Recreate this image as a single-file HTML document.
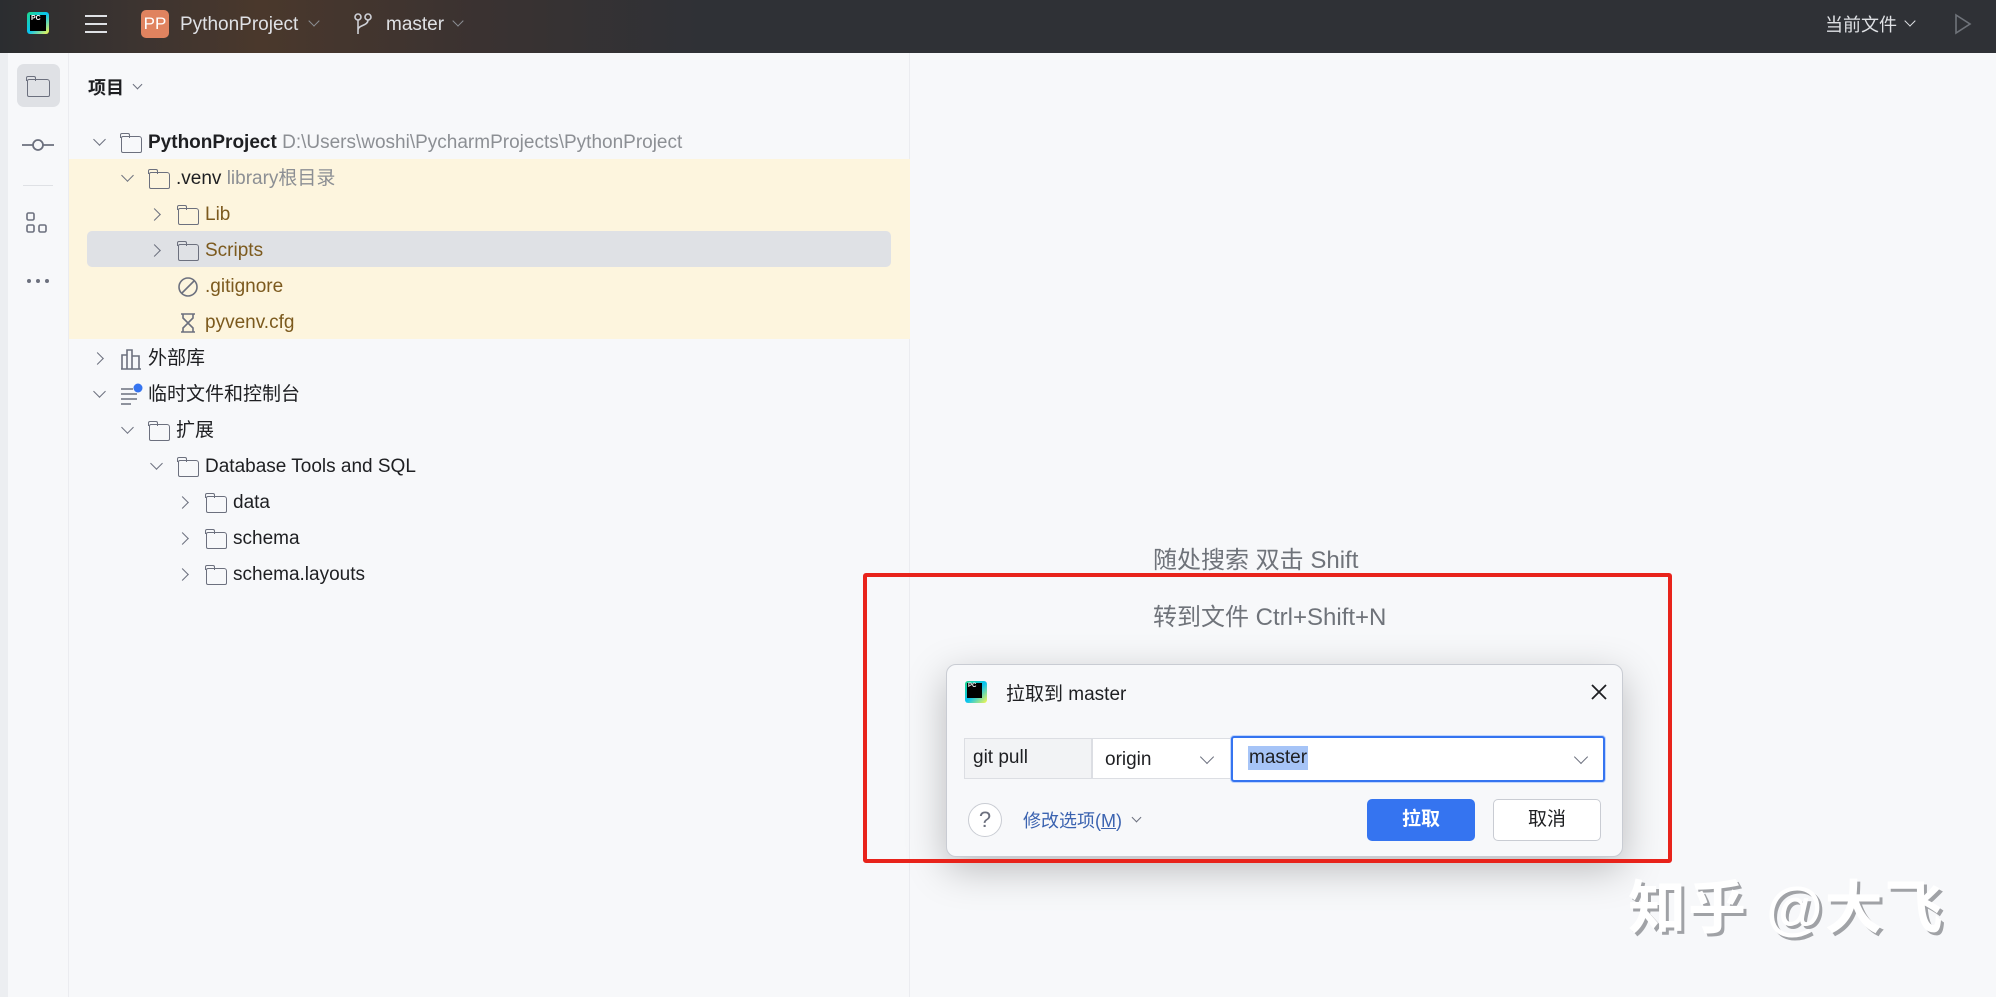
<!DOCTYPE html>
<html><head><meta charset="utf-8"><style>
*{margin:0;padding:0;box-sizing:border-box}
body{width:1996px;height:997px;overflow:hidden;background:#f7f8fa;font-family:"Liberation Sans","Noto Sans CJK SC",sans-serif;position:relative;color:#1e1f22}
.a{position:absolute}
.top{left:0;top:0;width:1996px;height:53px;background:linear-gradient(90deg,#2b2d30 0px,#3d3430 140px,#4a382c 260px,#3a3231 480px,#2f3136 700px,#2f3136 100%)}
.t{white-space:nowrap;font-size:19px;line-height:24px}
.row{position:absolute;left:0;height:36px;white-space:nowrap;font-size:19px;line-height:40px}
.chev{position:absolute;width:9px;height:9px;border-right:1.6px solid #6c707e;border-bottom:1.6px solid #6c707e}
.down{transform:rotate(45deg)}
.right{transform:rotate(-45deg)}
.fold{position:absolute;width:21px;height:17px;border:1.6px solid #6c707e;border-radius:2px 3px 2px 2px}
.fold:before{content:"";position:absolute;left:-1.6px;top:-4px;width:8px;height:4px;border:1.6px solid #6c707e;border-bottom:none;border-radius:2px 2px 0 0}
</style></head><body>
<div class="a" style="left:0;top:0;width:8px;height:997px;background:#eceef1"></div>
<div class="a top"></div>
<div class="a" style="left:27px;top:12px;width:22px;height:22px;background:linear-gradient(135deg,#21d789,#07c3f2 50%,#fcf84a);border-radius:3px"></div>
<div class="a" style="left:30px;top:15px;width:16px;height:16px;background:#000;color:#fff;font-size:7px;line-height:8px;padding-left:1px;font-weight:bold">PC</div>
<div class="a" style="left:85px;top:15px;width:22px;height:2px;background:#dfe1e5;box-shadow:0 8px 0 #dfe1e5,0 16px 0 #dfe1e5"></div>
<div class="a" style="left:141px;top:10px;width:28px;height:28px;background:#e0835f;border-radius:5px;color:#fff;font-size:17px;line-height:28px;text-align:center">PP</div>
<div class="a t" style="left:180px;top:13px;color:#dfe1e5">PythonProject</div>
<div class="a chev down" style="left:310px;top:17px;border-color:#8c8f94;width:8px;height:8px"></div>
<svg class="a" style="left:353px;top:12px" width="20" height="24" viewBox="0 0 20 24" fill="none" stroke="#ced0d6" stroke-width="1.6"><circle cx="5" cy="5" r="3"/><circle cx="15" cy="5" r="3"/><path d="M5 8v14M15 8c0 6-10 5-10 10"/></svg>
<div class="a t" style="left:386px;top:13px;color:#dfe1e5">master</div>
<div class="a chev down" style="left:454px;top:17px;border-color:#8c8f94;width:8px;height:8px"></div>
<div class="a t" style="left:1825px;top:13px;color:#dfe1e5;font-size:18px">当前文件</div>
<div class="a chev down" style="left:1906px;top:17px;border-color:#dfe1e5;width:8px;height:8px"></div>
<svg class="a" style="left:1953px;top:12px" width="20" height="24"><path d="M3 3L17 12L3 21Z" fill="none" stroke="#6f737a" stroke-width="1.6"/></svg>

<div class="a" style="left:8px;top:53px;width:61px;height:944px;background:#f7f8fa;border-right:1px solid #ebecf0"></div>
<div class="a" style="left:17px;top:64px;width:43px;height:43px;background:#dfe1e5;border-radius:7px"></div>
<div class="a fold" style="left:27px;top:79px;width:23px;height:18px"></div>
<svg class="a" style="left:22px;top:135px" width="32" height="20" stroke="#6c707e" stroke-width="1.8" fill="none"><circle cx="16" cy="10" r="5"/><path d="M0 10h11M21 10h11"/></svg>
<div class="a" style="left:23px;top:185px;width:30px;height:1px;background:#dfe1e5"></div>
<svg class="a" style="left:26px;top:212px" width="22" height="22" stroke="#6c707e" stroke-width="1.6" fill="none"><rect x="1" y="1" width="7" height="7" rx="1.5"/><rect x="1" y="13" width="7" height="7" rx="1.5"/><rect x="13" y="13" width="7" height="7" rx="1.5"/></svg>
<div class="a" style="left:27px;top:279px;width:4px;height:4px;border-radius:2px;background:#6c707e;box-shadow:9px 0 0 #6c707e,18px 0 0 #6c707e"></div>

<div class="a" style="left:69px;top:53px;width:841px;height:944px;background:#f7f8fa;border-right:1px solid #ebecf0"></div>
<div class="a t" style="left:88px;top:76px;font-weight:bold;font-size:18px">项目</div>
<div class="a chev down" style="left:134px;top:81px;width:7px;height:7px"></div>
<div class="a" style="left:69px;top:159px;width:841px;height:180px;background:#fdf5de"></div>
<div class="a" style="left:87px;top:231px;width:804px;height:36px;background:#dfe1e5;border-radius:5px"></div>

<div class="row" style="top:123px;width:910px">
 <div class="chev down" style="left:95px;top:12px"></div><div class="fold" style="left:121px;top:13px"></div>
 <span class="a" style="left:148px"><b>PythonProject</b> <span style="color:#8c8f94">D:\Users\woshi\PycharmProjects\PythonProject</span></span></div>
<div class="row" style="top:159px;width:910px">
 <div class="chev down" style="left:123px;top:12px"></div><div class="fold" style="left:149px;top:13px"></div>
 <span class="a" style="left:176px">.venv <span style="color:#8c8f94">library根目录</span></span></div>
<div class="row" style="top:195px;width:910px;color:#7c5a1e">
 <div class="chev right" style="left:150px;top:15px"></div><div class="fold" style="left:178px;top:13px"></div>
 <span class="a" style="left:205px">Lib</span></div>
<div class="row" style="top:231px;width:910px;color:#7c5a1e">
 <div class="chev right" style="left:150px;top:15px"></div><div class="fold" style="left:178px;top:13px"></div>
 <span class="a" style="left:205px">Scripts</span></div>
<div class="row" style="top:267px;width:910px;color:#7c5a1e">
 <svg class="a" style="left:177px;top:9px" width="22" height="22" fill="none" stroke="#6c707e" stroke-width="1.6"><circle cx="11" cy="11" r="9"/><path d="M5 17L17 5"/></svg>
 <span class="a" style="left:205px">.gitignore</span></div>
<div class="row" style="top:303px;width:910px;color:#7c5a1e">
 <svg class="a" style="left:179px;top:9px" width="18" height="22" fill="none" stroke="#6c707e" stroke-width="1.6"><path d="M2 2h14M2 20h14M4 2v4l5 5 5-5V2M4 20v-4l5-5 5 5v4"/></svg>
 <span class="a" style="left:205px">pyvenv.cfg</span></div>
<div class="row" style="top:339px;width:910px">
 <div class="chev right" style="left:93px;top:15px"></div>
 <svg class="a" style="left:120px;top:9px" width="22" height="22" fill="none" stroke="#6c707e" stroke-width="1.6"><path d="M1 21h20M2 21V7h5v14M7 21V2h5v19M12 21V8h7v13"/></svg>
 <span class="a" style="left:148px">外部库</span></div>
<div class="row" style="top:375px;width:910px">
 <div class="chev down" style="left:95px;top:12px"></div>
 <svg class="a" style="left:120px;top:8px" width="24" height="22" fill="none" stroke="#6c707e" stroke-width="1.6"><path d="M1 6h12M1 11h16M1 16h16M1 21h10"/><circle cx="18" cy="5" r="4.5" fill="#3574f0" stroke="none"/></svg>
 <span class="a" style="left:148px">临时文件和控制台</span></div>
<div class="row" style="top:411px;width:910px">
 <div class="chev down" style="left:123px;top:12px"></div><div class="fold" style="left:149px;top:13px"></div>
 <span class="a" style="left:176px">扩展</span></div>
<div class="row" style="top:447px;width:910px">
 <div class="chev down" style="left:152px;top:12px"></div><div class="fold" style="left:178px;top:13px"></div>
 <span class="a" style="left:205px">Database Tools and SQL</span></div>
<div class="row" style="top:483px;width:910px">
 <div class="chev right" style="left:178px;top:15px"></div><div class="fold" style="left:206px;top:13px"></div>
 <span class="a" style="left:233px">data</span></div>
<div class="row" style="top:519px;width:910px">
 <div class="chev right" style="left:178px;top:15px"></div><div class="fold" style="left:206px;top:13px"></div>
 <span class="a" style="left:233px">schema</span></div>
<div class="row" style="top:555px;width:910px">
 <div class="chev right" style="left:178px;top:15px"></div><div class="fold" style="left:206px;top:13px"></div>
 <span class="a" style="left:233px">schema.layouts</span></div>

<div class="a t" style="left:1153px;top:546px;font-size:24px;line-height:30px;color:#6f737a">随处搜索 双击 Shift</div>
<div class="a t" style="left:1153px;top:603px;font-size:24px;line-height:30px;color:#6f737a">转到文件 Ctrl+Shift+N</div>

<div class="a" style="left:946px;top:664px;width:677px;height:193px;background:#f7f8fa;border:1px solid #c9ccd3;border-radius:10px;box-shadow:0 12px 40px rgba(0,0,0,0.25)"></div>
<div class="a" style="left:965px;top:681px;width:22px;height:22px;background:linear-gradient(135deg,#21d789,#07c3f2 50%,#fcf84a);border-radius:3px"></div>
<div class="a" style="left:967px;top:683px;width:15px;height:15px;background:#000;color:#fff;font-size:6px;line-height:7px;font-weight:bold;padding-left:1px">PC</div>
<div class="a t" style="left:1006px;top:683px;font-size:19px">拉取到 master</div>
<svg class="a" style="left:1590px;top:683px" width="18" height="18" stroke="#1e1f22" stroke-width="1.8"><path d="M2 2L16 16M16 2L2 16"/></svg>
<div class="a" style="left:964px;top:738px;width:128px;height:41px;background:#f2f3f5;border:1px solid #dcdee3"></div>
<div class="a t" style="left:973px;top:746px;font-size:19px">git pull</div>
<div class="a" style="left:1092px;top:738px;width:140px;height:41px;background:#fff;border:1px solid #dcdee3"></div>
<div class="a t" style="left:1105px;top:748px;font-size:19px">origin</div>
<div class="a chev down" style="left:1202px;top:752px;width:10px;height:10px"></div>
<div class="a" style="left:1231px;top:736px;width:374px;height:46px;background:#fff;border:2px solid #3574f0;border-radius:3px;box-shadow:0 0 0 1px #c2d6fc"></div>
<div class="a t" style="left:1248px;top:746px;font-size:19px;background:#a6c4f7;padding:0 1px">master</div>
<div class="a chev down" style="left:1576px;top:752px;width:10px;height:10px"></div>
<div class="a" style="left:968px;top:803px;width:34px;height:34px;border:1px solid #c9ccd3;border-radius:50%;background:#fff;text-align:center;font-size:22px;line-height:32px;color:#6c707e">?</div>
<div class="a t" style="left:1023px;top:809px;font-size:18px;color:#3b63b0">修改选项(<u>M</u>)</div>
<div class="a chev down" style="left:1133px;top:814px;width:7px;height:7px"></div>
<div class="a" style="left:1367px;top:799px;width:108px;height:42px;background:#3574f0;border-radius:5px;color:#fff;font-weight:bold;font-size:19px;line-height:42px;text-align:center">拉取</div>
<div class="a" style="left:1493px;top:799px;width:108px;height:42px;background:#fff;border:1px solid #c9ccd3;border-radius:5px;font-size:19px;line-height:40px;text-align:center">取消</div>

<div class="a" style="left:863px;top:573px;width:809px;height:290px;border:4px solid #e8231b;border-radius:3px"></div>

<div class="a t" style="left:1628px;top:876px;font-size:58px;line-height:66px;color:#fff;font-weight:bold;text-shadow:3px 3px 0 #a0a2a6;letter-spacing:2px">知乎 @大飞</div>
</body></html>
